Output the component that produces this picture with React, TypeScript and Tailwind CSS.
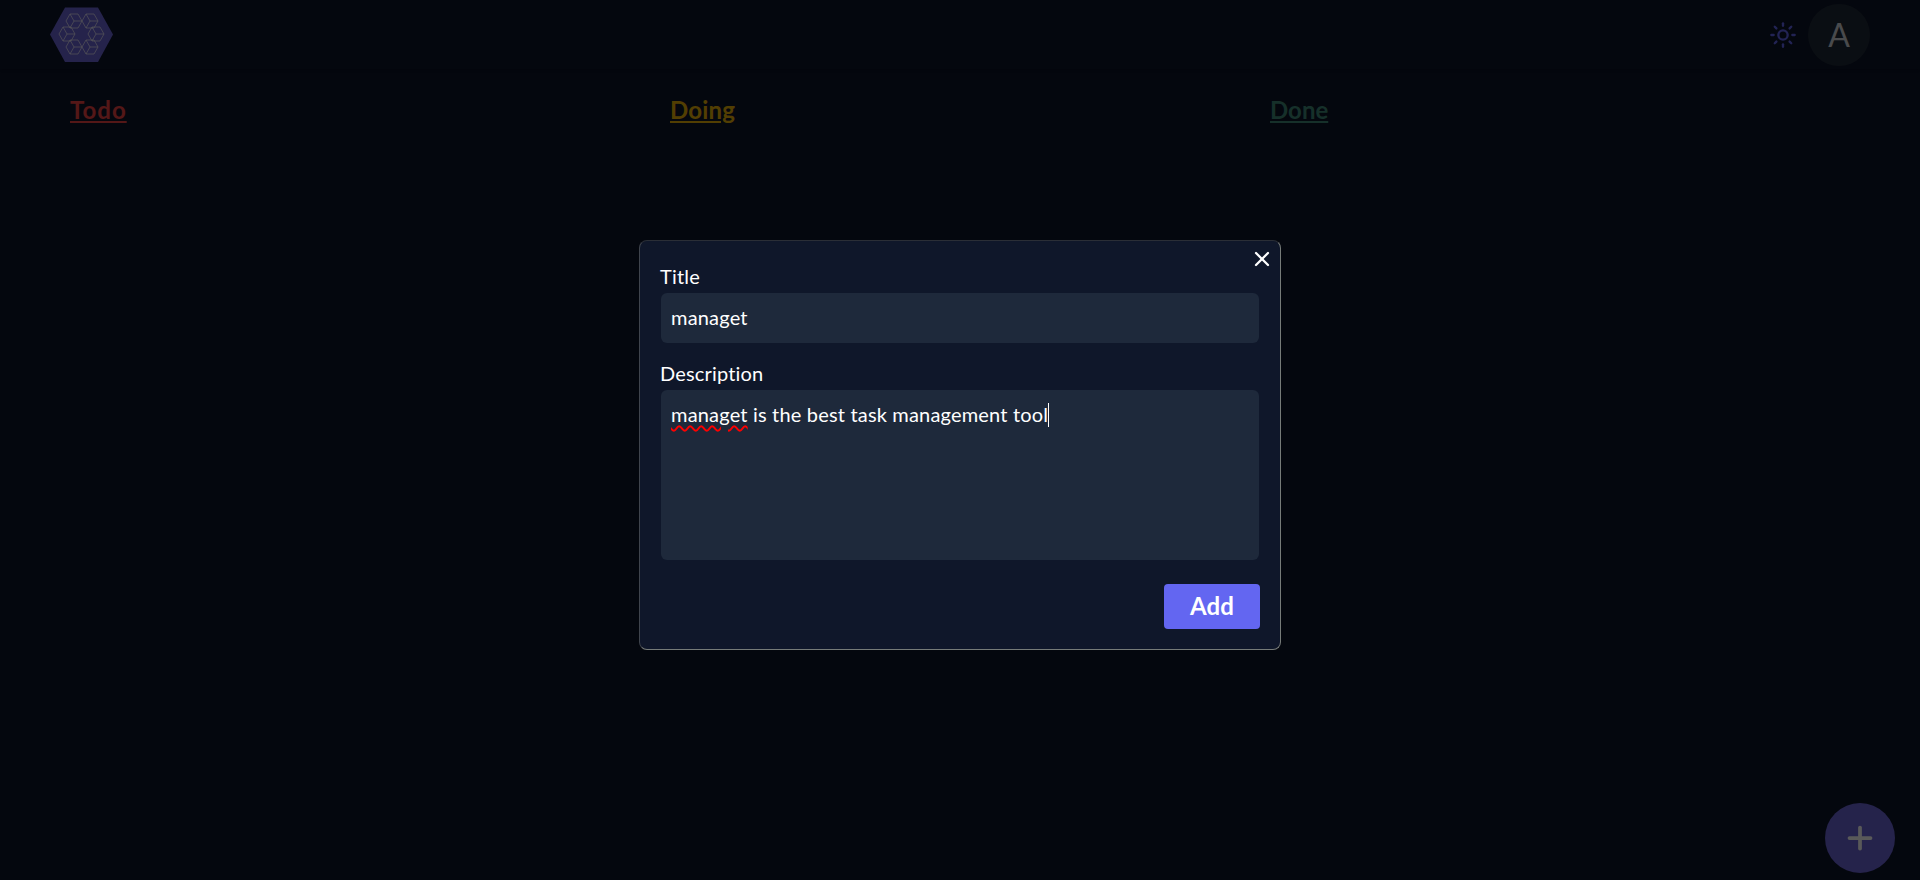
import { Plus, Sun, X } from "lucide-react";

const font = "font-['Lato','Open_Sans',sans-serif]";

const cubes = [
  [74, 21],
  [90, 21],
  [96, 34],
  [90, 47],
  [74, 47],
  [67, 34],
];

function Logo() {
  return (
    <svg width="64" height="56" viewBox="50 7 64 56" className="shrink-0">
      <polygon points="50,34.5 65,7.5 98,7.5 113,34.5 98,62 65,62" fill="#6c64d6" />
      {cubes.map(([x, y]) => (
        <g key={`${x}-${y}`} fill="none" stroke="#ffffff" strokeOpacity="0.8" strokeWidth="0.8">
          <polygon points={`${x - 8},${y} ${x - 4},${y - 7} ${x + 4},${y - 7} ${x + 8},${y} ${x + 4},${y + 7} ${x - 4},${y + 7}`} />
          <path d={`M${x} ${y} L${x + 8} ${y} M${x} ${y} L${x - 4} ${y - 7} M${x} ${y} L${x - 4} ${y + 7}`} />
        </g>
      ))}
    </svg>
  );
}

export default function App() {
  return (
    <div className={`relative h-[880px] overflow-hidden bg-[#0c1428] ${font}`}>
      <header className="flex h-[69px] items-center justify-between pl-[50px] pr-[50px] shadow-sm">
        <Logo />
        <div className="flex items-center gap-[11px]">
          <Sun size={28} className="text-[#6366f1]" strokeWidth={2} />
          <div className="flex h-[62px] w-[62px] items-center justify-center rounded-full bg-[#1f2937] text-[32px] text-[#d1d5db]">
            A
          </div>
        </div>
      </header>

      <main className="grid grid-cols-3 pl-[70px] pr-[50px] pt-[25px]">
        <h2 className="text-2xl font-bold tracking-[1px] text-[#ef4444] underline">Todo</h2>
        <h2 className="text-2xl font-bold tracking-[0.2px] text-[#eab308] underline">Doing</h2>
        <h2 className="text-2xl font-bold text-[#3f8a78] underline">Done</h2>
      </main>

      <button className="absolute bottom-[7px] right-[25px] flex h-[70px] w-[70px] items-center justify-center rounded-full bg-[#6c64d6] text-white">
        <Plus size={36} strokeWidth={2.5} />
      </button>

      <div className="absolute inset-0 flex items-start justify-center bg-black/65 pt-[240px]">
        <div className="relative w-[642px] rounded-lg border border-b-[#767b78] border-l-[#3f444d] border-r-[#767b78] border-t-[#2a2e36] bg-[#0f172a] pb-5 pl-[21px] pr-5 pt-[21px] tracking-[0.18px] text-white">
          <button className="absolute right-[6px] top-[6px] text-white">
            <X size={24} strokeWidth={2.25} />
          </button>
          <label className="-ml-px block text-xl leading-[28px]">Title</label>
          <input
            readOnly
            value="managet"
            className="mt-[3px] block h-[50px] w-[598px] rounded-md bg-[#1e293b] px-[10px] pb-[2px] text-xl tracking-[0.18px] text-white outline-none"
          />
          <label className="-ml-px mt-[16px] block text-xl leading-[28px]">Description</label>
          <div className="mt-[3px] h-[170px] w-[598px] rounded-md bg-[#1e293b] px-[10px] pt-[10px] text-xl leading-[28px]">
            <span className="underline decoration-[#ff0000] decoration-wavy decoration-2 underline-offset-3">managet</span> is the best task management tool
            <span className="inline-block h-[24px] w-px bg-white align-[-5px]" />
          </div>
          <div className="mt-[24px] flex justify-end">
            <button className="h-[45px] w-[96px] rounded-sm bg-[#6366f1] pb-px text-2xl font-bold text-white">Add</button>
          </div>
        </div>
      </div>
    </div>
  );
}
